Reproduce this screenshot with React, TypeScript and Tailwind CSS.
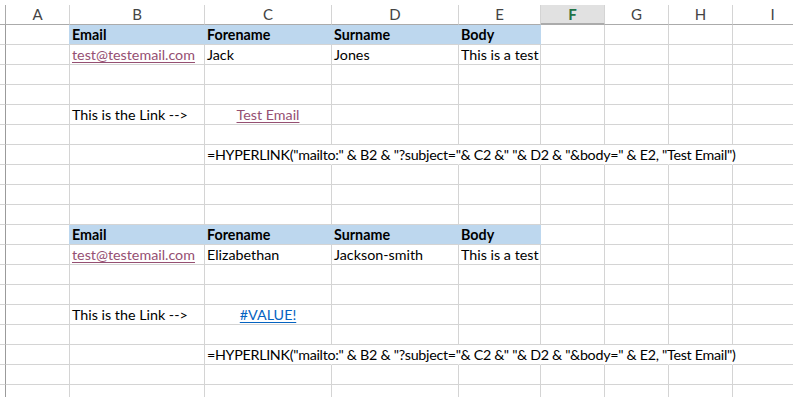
import React from "react";

type Cell = {
  t: string;
  bold?: boolean;
  fill?: boolean;
  link?: "visited" | "new";
  center?: boolean;
  spill?: boolean;
};

const COLS = ["A", "B", "C", "D", "E", "F", "G", "H", "I"];
const FORMULA =
  '=HYPERLINK("mailto:" & B2 & "?subject="& C2 &" "& D2 & "&body=" & E2, "Test Email")';

const headerRow: Record<string, Cell> = {
  B: { t: "Email", bold: true, fill: true },
  C: { t: "Forename", bold: true, fill: true },
  D: { t: "Surname", bold: true, fill: true },
  E: { t: "Body", bold: true, fill: true },
};

// row number -> cells
const sheet: Record<number, Record<string, Cell>> = {
  1: headerRow,
  2: {
    B: { t: "test@testemail.com", link: "visited" },
    C: { t: "Jack" },
    D: { t: "Jones" },
    E: { t: "This is a test" },
  },
  5: {
    B: { t: "This is the Link -->" },
    C: { t: "Test Email", link: "visited", center: true },
  },
  7: { C: { t: FORMULA, spill: true } },
  11: headerRow,
  12: {
    B: { t: "test@testemail.com", link: "visited" },
    C: { t: "Elizabethan" },
    D: { t: "Jackson-smith" },
    E: { t: "This is a test" },
  },
  15: {
    B: { t: "This is the Link -->" },
    C: { t: "#VALUE!", link: "new", center: true },
  },
  17: { C: { t: FORMULA, spill: true } },
};

const grid =
  "grid grid-cols-[6px_64px_135px_127px_127px_82px_64px_64px_64px_80px]";

function DataCell({ cell, rightFill, hideRight }: { cell?: Cell; rightFill: boolean; hideRight: boolean }) {
  let border = "border-[#d4d4d4]";
  if (cell?.fill || rightFill) border = "border-r-[#bdd7ee] border-b-[#d4d4d4]";
  else if (hideRight) border = "border-r-transparent border-b-[#d4d4d4]";

  let color = "text-black";
  if (cell?.link === "visited") color = "text-[#954f72] underline underline-offset-[2px]";
  if (cell?.link === "new") color = "text-[#0563c1] underline underline-offset-[2px]";

  return (
    <div
      className={`h-5 border-r border-b ${border} ${cell?.fill ? "bg-[#bdd7ee]" : ""} flex items-end ${
        cell?.center ? "justify-center" : "justify-start pl-[2px]"
      } ${cell?.spill ? "overflow-visible" : "overflow-hidden"}`}
    >
      {cell && (
        <span
          className={`whitespace-nowrap leading-[18px] ${cell.bold ? "font-bold" : ""} ${
            cell.spill ? "tracking-[-0.3px]" : ""
          } ${color}`}
        >
          {cell.t}
        </span>
      )}
    </div>
  );
}

export default function App() {
  const rows = Array.from({ length: 19 }, (_, i) => i + 1);
  return (
    <div className="w-[793px] h-[397px] overflow-hidden bg-white font-['Lato',sans-serif] text-[14.3px]">
      <div className="h-[5px]" />
      <div className={grid}>
        <div className="h-5 border-r border-b border-[#ababab]" />
        {COLS.map((c) => (
          <div
            key={c}
            className={`h-5 flex items-center justify-center text-[15px] border-b border-b-[#ababab] ${
              c === "F"
                ? "bg-[#e1e1e1] border-r border-r-[#d4d4d4] border-b-2 border-b-[#217346] text-[#217346] font-bold"
                : "border-r border-r-[#d4d4d4] text-[#444]"
            }`}
          >
            {c}
          </div>
        ))}
        {rows.map((r) => {
          const data = sheet[r] ?? {};
          const spillIdx = COLS.findIndex((c) => data[c]?.spill);
          return (
            <React.Fragment key={r}>
              <div className="h-5 border-r border-b border-r-[#9b9b9b] border-b-[#d4d4d4]" />
              {COLS.map((c, i) => (
                <DataCell
                  key={c}
                  cell={data[c]}
                  rightFill={!!data[COLS[i + 1]]?.fill}
                  hideRight={spillIdx >= 0 && i >= spillIdx && i <= spillIdx + 5}
                />
              ))}
            </React.Fragment>
          );
        })}
      </div>
    </div>
  );
}
